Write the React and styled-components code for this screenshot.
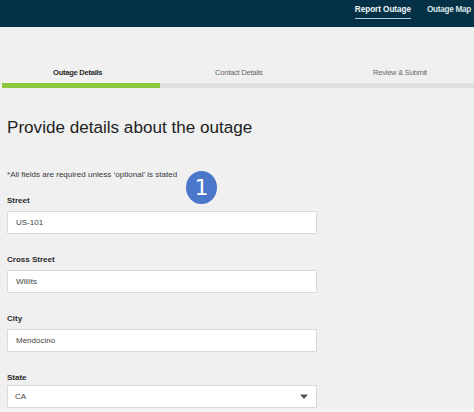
import React from "react";
import styled, { createGlobalStyle } from "styled-components";

const GlobalStyle = createGlobalStyle`
  *, *::before, *::after { box-sizing: border-box; }
  body {
    margin: 0;
    overflow: hidden;
    background: #f0f0f0;
    font-family: "Liberation Sans", Arial, sans-serif;
    color: #222;
  }
`;

const Page = styled.div`
  height: 412px;
  overflow: hidden;
  background: #f0f0f0;
  border-bottom: 3px solid #f6f6f6;
`;

const Header = styled.header`
  display: flex;
  justify-content: flex-end;
  gap: 16px;
  height: 27px;
  padding: 3px 3px 0 0;
  background: #043146;
`;

const NavLink = styled.a`
  height: 16px;
  border-bottom: 1px solid ${(p) => (p.$active ? "#b5cbd3" : "transparent")};
  color: ${(p) => (p.$active ? "#f3f7f8" : "#dde6ea")};
  font-size: 8.2px;
  font-weight: 700;
  line-height: 13px;
  white-space: nowrap;
  letter-spacing: ${(p) => p.$spacing || "0"};
`;

const Steps = styled.nav`
  display: flex;
  padding: 38px 0 0 2px;
`;

const Step = styled.div`
  flex: 0 0 ${(p) => p.$width};
  height: 23px;
  padding-left: ${(p) => p.$inset};
  border-bottom: 5px solid ${(p) => (p.$active ? "#8dc63f" : "#dfdfdf")};
  color: ${(p) => (p.$active ? "#2a2a2a" : "#686868")};
  font-size: 7.6px;
  font-weight: ${(p) => (p.$active ? 700 : 400)};
  line-height: 15px;
  letter-spacing: ${(p) => p.$spacing};
  white-space: nowrap;
`;

const Form = styled.main`
  padding: 28px 0 0 7px;
`;

const Title = styled.h1`
  margin: 0;
  font-size: 17.1px;
  font-weight: 400;
  line-height: 24px;
  color: #222;
`;

const NoteRow = styled.div`
  display: flex;
  gap: 8px;
  height: 54px;
  padding-top: 31px;
`;

const Note = styled.p`
  margin: 0;
  width: 171px;
  font-size: 8.05px;
  line-height: 7px;
  color: #383838;
  white-space: nowrap;
`;

const Marker = styled.span`
  display: flex;
  align-items: center;
  justify-content: center;
  flex: 0 0 31px;
  height: 33px;
  border-radius: 50%;
  background: #4b77ca;
  color: #fff;
  font-family: "DejaVu Sans", sans-serif;
  font-size: 22px;
  line-height: 32px;
`;

const Field = styled.div`
  width: 309.5px;
  height: 59px;
`;

const Label = styled.label`
  display: block;
  height: ${(p) => p.$height || "17px"};
  font-size: 8px;
  font-weight: 700;
  line-height: 13px;
  letter-spacing: ${(p) => p.$spacing || "0"};
  color: #2b2b2b;
`;

const Control = styled.div`
  display: flex;
  align-items: center;
  justify-content: space-between;
  height: 23px;
  padding: 0 8px 0 ${(p) => p.$inset || "8px"};
  border: 1px solid #d9d9d9;
  border-radius: 1px;
  background: #fff;
  color: #444;
  font-size: 8px;
  line-height: 14px;
`;

const Arrow = styled.svg`
  width: 8px;
  height: 5px;
`;

const fields = [
  { label: "Street", value: "US-101" },
  { label: "Cross Street", value: "Willits" },
  { label: "City", value: "Mendocino" },
];

export default function App() {
  return (
    <Page>
      <GlobalStyle />
      <Header>
        <NavLink $active $spacing="-0.06px">Report Outage</NavLink>
        <NavLink $spacing="-0.28px">Outage Map</NavLink>
      </Header>
      <Steps>
        <Step $active $width="158px" $inset="51px" $spacing="-0.28px">Outage Details</Step>
        <Step $width="158px" $inset="55px" $spacing="-0.26px">Contact Details</Step>
        <Step $width="156px" $inset="55px" $spacing="-0.26px">Review &amp; Submit</Step>
      </Steps>
      <Form>
        <Title>Provide details about the outage</Title>
        <NoteRow>
          <Note>*All fields are required unless ‘optional’ is stated</Note>
          <Marker>1</Marker>
        </NoteRow>
        {fields.map((f) => (
          <Field key={f.label}>
            <Label>{f.label}</Label>
            <Control>{f.value}</Control>
          </Field>
        ))}
        <Field>
          <Label $height="14px">State</Label>
          <Control $inset="7px">
            CA
            <Arrow viewBox="0 0 8 5"><path d="M0 0.5H8L4 5Z" fill="#555" /></Arrow>
          </Control>
        </Field>
      </Form>
    </Page>
  );
}
